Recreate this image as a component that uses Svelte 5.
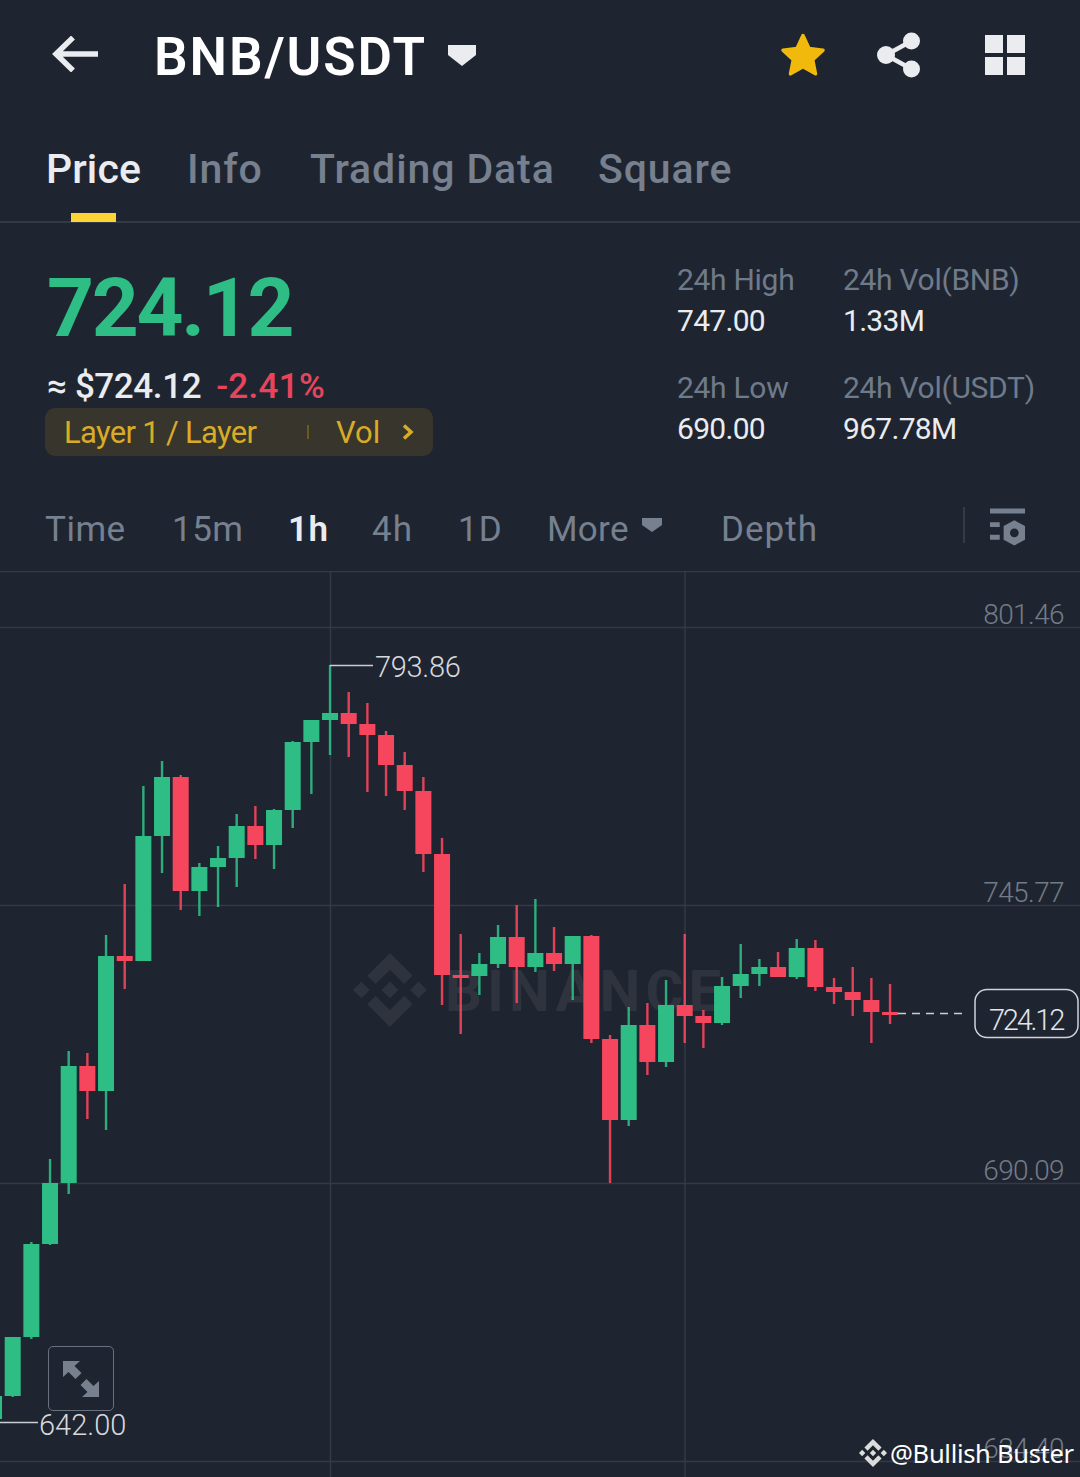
<script>
  const G = '#2ebd85';
  const R = '#f6465d';
  const STEP = 18.667;
  // [index, rising, wick top, body top, body bottom, wick bottom]
  const raw = [
    [-1,1,1396,1396,1419,1419],
    [0,1,1337,1337,1396,1397],[1,1,1242,1244,1337,1339],[2,1,1159,1183,1244,1245],[3,1,1051,1066,1183,1194],
    [4,0,1053,1066,1091,1119],[5,1,935,956,1091,1130],[6,0,884,956,961,989],[7,1,786,836,961,961],
    [8,1,761,777,836,873],[9,0,775,777,891,910],[10,1,863,867,891,916],[11,1,846,858,867,907],
    [12,1,814,826,858,887],[13,0,806,826,845,859],[14,1,809,810,845,869],[15,1,741,742,810,828],
    [16,1,720,720,742,794],[17,1,665,713,720,755],[18,0,692,713,724,757],[19,0,703,724,735,792],
    [20,0,731,735,765,796],[21,0,752,765,791,810],[22,0,777,791,854,872],[23,0,838,854,975,1005],
    [24,0,934,975,978,1034],[25,1,953,964,976,995],[26,1,925,937,964,968],[27,0,905,937,967,1003],
    [28,1,899,953,967,972],[29,0,927,953,964,971],[30,1,936,936,964,1000],[31,0,935,936,1039,1043],
    [32,0,1035,1039,1120,1183],[33,1,1007,1025,1120,1126],[34,0,1003,1025,1062,1075],[35,1,980,1005,1062,1067],
    [36,0,934,1005,1016,1043],[37,0,1010,1016,1023,1048],[38,1,977,986,1023,1025],[39,1,944,974,986,998],
    [40,1,959,967,974,986],[41,0,952,967,977,977],[42,1,939,948,977,979],[43,0,940,948,987,991],
    [44,0,978,987,992,1004],[45,0,967,992,1000,1016],[46,0,978,1000,1012,1043],[47,0,984,1012,1015,1024]
  ];
  const TOP = 571;
  const candles = raw.map(([i, up, wt, bt, bb, wb]) => ({
    x: 12.7 + STEP * i,
    color: up ? G : R,
    wt: wt - TOP, bt: bt - TOP, bb: bb - TOP, wb: wb - TOP
  }));
  const gridY = [571, 627, 905, 1183, 1461].map((y) => y - TOP);
  const axis = [['801.46', 624], ['745.77', 902], ['690.09', 1180], ['634.40', 1458]];
  const stats = [
    ['24h High', '747.00'], ['24h Vol(BNB)', '1.33M'],
    ['24h Low', '690.00'], ['24h Vol(USDT)', '967.78M']
  ];
  const logo = 'M16.624 13.9202l2.7175 2.7154-7.353 7.353-7.353-7.352 2.7175-2.7164 4.6355 4.6595 4.6356-4.6595zm4.6366-4.6366L24 12l-2.7154 2.7164L18.5682 12l2.6924-2.7164zm-9.272.001l2.7163 2.6914-2.7164 2.7174v-.001L9.2721 12l2.7164-2.7154zm-9.2722-.001L5.4088 12l-2.6914 2.6924L0 12l2.7164-2.7164zM11.9885.0115l7.353 7.329-2.7174 2.7154-4.6356-4.6356-4.6355 4.6595-2.7174-2.7154 7.353-7.353z';
</script>

<div class="page">
  <header class="top">
    <svg class="back" width="46" height="36" viewBox="0 0 46 36" fill="none" stroke="#eaecef" stroke-width="5.5">
      <path d="M46 18H4M21 1.5 4 18l17 16.5" />
    </svg>
    <h1>BNB/USDT</h1>
    <svg class="caret" width="28" height="22" viewBox="0 0 28 22"><path d="M0 1h28v10L14 22 0 11z" fill="#eaecef" /></svg>
    <div class="actions">
      <svg width="46" height="46" viewBox="0 0 46 46" class="star">
        <path d="M23 3.5l6 13 14 1.7-10.3 9.6 2.8 14-12.5-7-12.5 7 2.8-14L3 18.2l14-1.7z" fill="#f0b90b" stroke="#f0b90b" stroke-width="3.5" stroke-linejoin="round" />
      </svg>
      <svg width="44" height="46" viewBox="0 0 44 46" class="share" fill="#eaecef" stroke="#eaecef">
        <path d="M9 23 34.500 9M9 23l25.500 14" stroke-width="4.500" fill="none" />
        <circle cx="9" cy="23" r="9" stroke="none" /><circle cx="34.500" cy="9" r="8.500" stroke="none" /><circle cx="34.500" cy="37" r="8.500" stroke="none" />
      </svg>
      <div class="tiles"><i></i><i></i><i></i><i></i></div>
    </div>
  </header>

  <nav class="tabs">
    <span class="tab active">Price</span><span class="tab">Info</span><span class="tab">Trading Data</span><span class="tab">Square</span>
  </nav>

  <section class="summary">
    <div class="left">
      <div class="last">724.12</div>
      <div class="sub"><span class="approx">≈ $724.12</span><span class="pct">-2.41%</span></div>
      <div class="tag">
        <span class="tag-a">Layer 1 / Layer</span><i class="tag-div"></i><span class="tag-b">Vol</span>
        <svg width="12" height="16" viewBox="0 0 12 16" fill="none" stroke="#d9ab26" stroke-width="3.500"><path d="M2 1.500 9 8l-7 6.500" /></svg>
      </div>
    </div>
    <div class="stats">
      {#each stats as [k, v]}
        <div class="stat"><div class="k">{k}</div><div class="v">{v}</div></div>
      {/each}
    </div>
  </section>

  <div class="frames">
    <span class="tf">Time</span><span class="tf">15m</span><span class="on">1h</span><span>4h</span><span>1D</span>
    <span class="more"><span class="more-t">More</span><svg width="20" height="14" viewBox="0 0 20 14"><path d="M0 0h20v7l-10 7L0 7z" fill="#76808f" /></svg></span>
    <span>Depth</span>
    <i class="frame-div"></i>
    <svg class="cfg" width="36" height="40" viewBox="0 0 37 40">
      <path d="M0 0h36v5H0zM0 14h10v5H0zM0 27h10v5H0z" fill="#76808f" />
      <path d="M25 12l11 6v14l-11 6-11-6V18z" fill="#76808f" />
      <circle cx="25" cy="25" r="4.500" fill="#1f2530" />
    </svg>
  </div>

  <div class="chart">
    <svg width="1080" height="906" viewBox="0 0 1080 906">
      {#each gridY as y}<line x1="0" x2="1080" y1={y + 0.5} y2={y + 0.5} class="grid" />{/each}
      <line x1="330.500" x2="330.500" y1="0" y2="906" class="grid" />
      <line x1="685" x2="685" y1="0" y2="906" class="grid" />

      <path d={logo} transform="translate(353 382) scale(3.080)" fill="#2e333e" />
      <text x="445" y="440" class="mark" textLength="276">BINANCE</text>

      {#each axis as [label, y]}<text x="1064" y={y - TOP} text-anchor="end" class="axis">{label}</text>{/each}

      {#each candles as c}
        <rect x={c.x - 1.2} y={c.wt} width="2.400" height={c.wb - c.wt} fill={c.color} opacity="0.9" />
        <rect x={c.x - 8} y={c.bt} width="16" height={Math.max(c.bb - c.bt, 3)} fill={c.color} />
      {/each}

      <path d="M330 94.500h43M0 851.500h38" class="lead" />
      <text x="375" y="106" class="extreme hi">793.86</text>
      <text x="39" y="864" class="extreme">642.00</text>

      <line x1="898" x2="966" y1="442.500" y2="442.500" class="dash" />
      <rect x="975" y="418.500" width="103" height="48" rx="12" class="now-box" />
      <text x="1026" y="458.500" text-anchor="middle" class="now">724.12</text>
    </svg>

    <button class="expand" aria-label="Expand">
      <svg width="38" height="38" viewBox="0 0 38 38" fill="#76808f">
        <path d="M1 1h17l-5.500 5 7 7-6 6-7-7L1 17z" /><path d="M37 37H20l5.500-5-7-7 6-6 7 7L37 21z" />
      </svg>
    </button>

    <div class="credit">
      <svg width="28" height="28" viewBox="0 0 24 24"><path d={logo} fill="#dcdcdc" /></svg>
      <span>@Bullish Buster</span>
    </div>
  </div>
</div>

<style>
  :global(body) { margin: 0; background: #1f2530; }
  .page {
    width: 1080px; height: 1477px; overflow: hidden; background: #1f2530;
    font-family: Roboto, "Noto Sans", sans-serif; color: #eaecef;
    display: flex; flex-direction: column;
  }
  .top { height: 110px; display: flex; align-items: center; padding-left: 52px; box-sizing: border-box; }
  .back { flex: none; margin-top: -2px; }
  h1 { margin: 4px 0 0 56px; font-size: 53px; font-weight: 600; letter-spacing: 1.900px; color: #fff; line-height: 1; }
  .caret { margin-left: 21px; margin-top: 0; }
  .actions { margin-left: auto; display: flex; align-items: center; padding-right: 55px; }
  .star { margin-right: 51px; }
  .share { margin-right: 64px; }
  .tiles { display: grid; grid-template-columns: 18px 18px; grid-auto-rows: 18px; gap: 4px; }
  .tiles i { background: #eaecef; }

  .tabs {
    height: 113px; box-sizing: border-box; border-bottom: 2px solid #333a46;
    display: grid; grid-template-columns: 141px 123px 288px 1fr; padding-left: 46px; padding-top: 34px;
    font-size: 41px; font-weight: 500; color: #76808f; line-height: 50px; letter-spacing: 0.900px;
  }
  .tab.active { color: #eaecef; position: relative; letter-spacing: 0.100px; }
  .tab.active::after {
    content: ""; position: absolute; left: 25px; top: 69px; width: 45px; height: 9px; background: #fcd535;
  }

  .summary { height: 267px; display: flex; justify-content: space-between; box-sizing: border-box; padding: 34px 0 0 45px; }
  .last { font-size: 82px; font-weight: 700; color: #2ebd85; line-height: 92px; letter-spacing: -2.300px; padding-left: 2px; margin-top: 5px; }
  .sub { display: flex; gap: 15px; margin-top: 13px; font-size: 35px; font-weight: 500; line-height: 40px; padding-left: 2px; letter-spacing: -0.400px; }
  .pct { color: #e8455c; letter-spacing: 0.300px; }
  .tag {
    width: 388px; height: 48px; margin-top: 1px; box-sizing: border-box; padding-left: 19px;
    background: #38352d; border-radius: 10px; color: #d9ab26; font-size: 31px;
    display: flex; align-items: center;
  }
  .tag-a { width: 243px; letter-spacing: -0.700px; }
  .tag-div { width: 2px; height: 14px; background: #6b5a20; margin-right: 27px; }
  .tag-b { width: 66px; }
  .stats {
    display: grid; grid-template-columns: 166px 237px; padding-top: 3px; align-content: start; row-gap: 26px;
    font-size: 30px;
  }
  .k { color: #6f7a8a; line-height: 40px; letter-spacing: -0.300px; }
  .v { color: #eaecef; line-height: 42px; letter-spacing: -0.700px; }

  .frames {
    height: 81px; box-sizing: border-box;
    display: grid; grid-template-columns: 127px 116px 84px 86px 89px 174px 242px 26px auto;
    padding-left: 45px; font-size: 35px; color: #76808f; letter-spacing: 1px; line-height: 50px;
    padding-top: 15px;
  }
  .tf { letter-spacing: 0.500px; }
  .on { color: #eaecef; font-weight: 600; letter-spacing: 0.500px; }
  .more { display: flex; }
  .more-t { letter-spacing: 0.300px; }
  .more svg { margin: 13px 0 0 13px; }
  .frame-div { width: 2px; height: 36px; background: #343b47; margin-top: 2px; }
  .cfg { margin: 3px 0 0 1px; }

  .chart { position: relative; height: 906px; }
  .chart > svg { display: block; }
  .grid { stroke: #343a45; stroke-width: 1.500; }
  .mark { font: 700 58px Roboto, sans-serif; fill: #2e333e; }
  .axis { font: 300 28px Roboto, sans-serif; fill: #737b88; letter-spacing: -0.600px; }
  .extreme { font: 300 29px Roboto, sans-serif; fill: #d5d9de; }
  .extreme.hi { letter-spacing: -0.300px; }
  .lead { stroke: #c9ced5; stroke-width: 1.500; fill: none; }
  .dash { stroke: #c9ced5; stroke-width: 1.500; stroke-dasharray: 8 6; }
  .now-box { fill: #1f2530; stroke: #d0d4da; stroke-width: 1.500; }
  .now { font: 300 29px Roboto, sans-serif; fill: #e2e5e9; letter-spacing: -2.200px; }
  .expand {
    position: absolute; left: 48px; top: 775px; width: 66px; height: 65px; padding: 0; box-sizing: border-box;
    background: #1f2530; border: 1.500px solid #687180; border-radius: 5px;
    display: flex; align-items: center; justify-content: center;
  }
  .credit {
    position: absolute; left: 859px; top: 864px; display: flex; align-items: center; gap: 3px; white-space: nowrap;
    font-family: "Noto Sans", sans-serif; font-size: 25.500px; letter-spacing: -0.300px; color: #fff; line-height: 36px;
  }
</style>
